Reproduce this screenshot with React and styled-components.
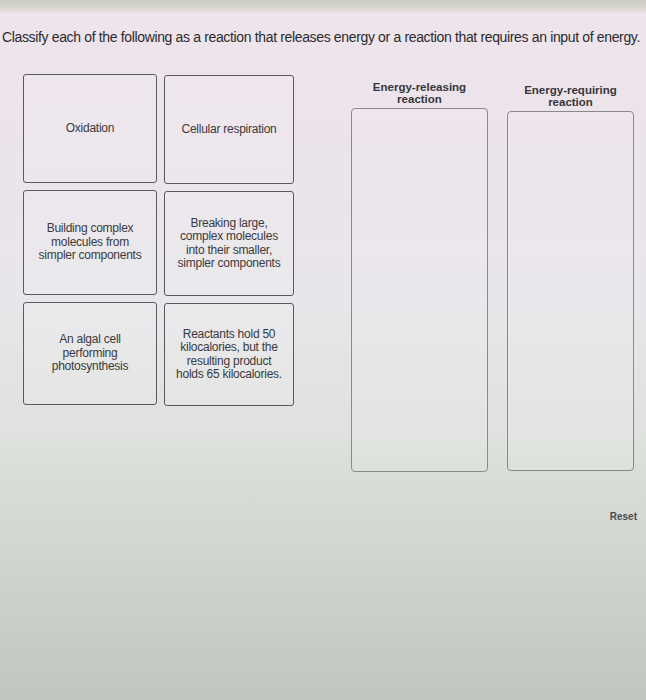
import React from "react";
import styled, { createGlobalStyle } from "styled-components";

const GlobalStyle = createGlobalStyle`
  html, body {
    margin: 0;
    padding: 0;
  }
  body {
    width: 646px;
    height: 700px;
    overflow: hidden;
    font-family: "Liberation Sans", Arial, sans-serif;
    background:
      linear-gradient(180deg, #cbcbc2 0px, #d8d6d0 8px, #eee4ec 14px, #ece3eb 120px, #e8e6ea 300px, #dfe2de 430px, #cfd5cf 560px, #c0c7bf 700px);
  }
`;

const Page = styled.div`
  width: 646px;
  height: 700px;
  padding-top: 29px;
  box-sizing: border-box;
`;

const Prompt = styled.p`
  margin: 0 0 0 2px;
  font-size: 14px;
  letter-spacing: -0.35px;
  color: #2a2a2e;
  white-space: nowrap;
`;

const Board = styled.div`
  display: flex;
  align-items: flex-start;
  margin-top: 29px;
  padding-left: 23px;
`;

const Pool = styled.div`
  display: grid;
  grid-template-columns: 134px 130px;
  grid-template-rows: 109px 105px 103px;
  column-gap: 7px;
  row-gap: 7px;
`;

const Card = styled.div`
  border: 1px solid #5a5a5e;
  border-radius: 3px;
  display: flex;
  align-items: center;
  justify-content: center;
  text-align: center;
  padding: 0 4px;
  font-size: 12px;
  line-height: 13.5px;
  letter-spacing: -0.25px;
  color: #3a3a3e;
  background: rgba(255, 255, 255, 0.12);
  transform: translateY(${(p) => p.$dy || 0}px);
`;

const Zones = styled.div`
  display: flex;
  margin-left: 57px;
  margin-top: 7px;
  gap: 19px;
`;

const Zone = styled.div`
  display: flex;
  flex-direction: column;
  align-items: center;
  width: ${(p) => p.$w}px;
  padding-top: ${(p) => p.$top}px;
`;

const ZoneTitle = styled.div`
  font-size: 11.5px;
  font-weight: bold;
  line-height: 12px;
  text-align: center;
  color: #36363a;
  margin-bottom: 3px;
`;

const DropBox = styled.div`
  width: 100%;
  height: ${(p) => p.$h}px;
  box-sizing: border-box;
  border: 1px solid #8a8a8c;
  border-radius: 4px;
  background: rgba(255, 255, 255, 0.1);
`;

const Footer = styled.div`
  width: 637px;
  display: flex;
  justify-content: flex-end;
  margin-top: 39px;
`;

const ResetButton = styled.button`
  border: none;
  background: none;
  padding: 0;
  font-family: inherit;
  font-size: 10px;
  font-weight: bold;
  color: #4a4a4e;
  cursor: pointer;
`;

const cards = [
  ["Oxidation"],
  ["Cellular respiration"],
  ["Building complex", "molecules from", "simpler components"],
  ["Breaking large,", "complex molecules", "into their smaller,", "simpler components"],
  ["An algal cell", "performing", "photosynthesis"],
  ["Reactants hold 50", "kilocalories, but the", "resulting product", "holds 65 kilocalories."],
];

function App() {
  return (
    <Page>
      <GlobalStyle />
      <Prompt>
        Classify each of the following as a reaction that releases energy or a
        reaction that requires an input of energy.
      </Prompt>
      <Board>
        <Pool>
          {cards.map((lines, i) => (
            <Card key={i} $dy={i % 2 === 1 ? 1 : 0}>
              <div>
                {lines.map((l, j) => (
                  <React.Fragment key={j}>
                    {l}
                    {j < lines.length - 1 && <br />}
                  </React.Fragment>
                ))}
              </div>
            </Card>
          ))}
        </Pool>
        <Zones>
          <Zone $w={137} $top={0}>
            <ZoneTitle>
              Energy-releasing
              <br />
              reaction
            </ZoneTitle>
            <DropBox $h={364} />
          </Zone>
          <Zone $w={127} $top={3}>
            <ZoneTitle>
              Energy-requiring
              <br />
              reaction
            </ZoneTitle>
            <DropBox $h={360} />
          </Zone>
        </Zones>
      </Board>
      <Footer>
        <ResetButton>Reset</ResetButton>
      </Footer>
    </Page>
  );
}

export default App;
